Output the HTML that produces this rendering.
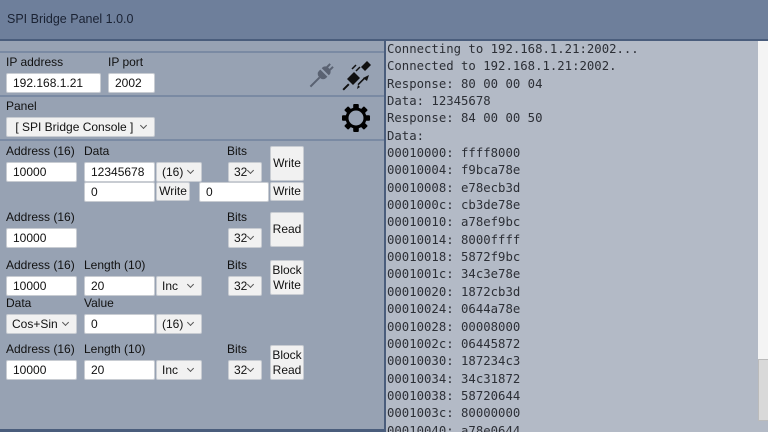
<!DOCTYPE html>
<html><head><meta charset="utf-8"><style>
*{box-sizing:border-box;margin:0;padding:0}
html,body{width:768px;height:432px;overflow:hidden}
body{background:#97a2b3;font-family:"Liberation Sans",Arial,sans-serif;font-size:12px;color:#111;position:relative}
.a{position:absolute}
.hdr{left:0;top:0;width:768px;height:41px;background:#6e7f9b;border-bottom:2px solid #4a5d7c}
.hdr span{position:absolute;left:7px;top:12px;font-size:12.5px;color:#1a2233}
.sep{position:absolute;left:0;width:384px;height:2px;background:#7a8aa3}
.in{position:absolute;background:#fff;border:1px solid #c8ccd2;border-radius:2px;height:20px;line-height:18px;padding-left:6px;font-size:12px;white-space:nowrap}
.sel{position:absolute;background:#f1f1f1;border:1px solid #c8ccd2;border-radius:2px;height:20px;line-height:18px;padding-left:5px;font-size:12px;white-space:nowrap}
.sel:after{content:"";position:absolute;right:8px;top:5px;width:4px;height:4px;border-right:1px solid #555;border-bottom:1px solid #555;transform:rotate(45deg)}
.btn{position:absolute;background:#f1f1f1;border:1px solid #c8ccd2;border-radius:2px;text-align:center;font-size:12px;display:flex;align-items:center;justify-content:center;line-height:15px}
.l{position:absolute;font-size:12px;white-space:nowrap}
.con{left:384px;top:41px;width:384px;height:391px;background:#b3bac6;border-left:2px solid #4a5d7c;overflow:hidden}
.con pre{position:absolute;left:1px;top:0px;font-family:"DejaVu Sans Mono","Liberation Mono",monospace;font-size:12.3px;line-height:17.35px;color:#2c2f36}
</style></head><body>
<div class="a hdr"><span>SPI Bridge Panel 1.0.0</span></div>
<div class="sep" style="top:51px"></div>
<div class="sep" style="top:95px"></div>
<div class="sep" style="top:139px"></div>

<div class="l" style="left:6px;top:55px">IP address</div>
<div class="l" style="left:108px;top:55px">IP port</div>
<div class="in" style="left:6px;top:73px;width:95px">192.168.1.21</div>
<div class="in" style="left:108px;top:73px;width:47px">2002</div>
<svg class="a" style="left:305px;top:60px" width="32" height="32" viewBox="0 0 32 32"><g transform="rotate(45 16 16)" fill="#5a6272"><rect x="11" y="5" width="10" height="13" rx="4"/><rect x="10" y="10" width="12" height="2" fill="#97a2b3"/><rect x="15" y="18" width="2" height="13"/><rect x="13" y="1" width="2" height="5"/><rect x="17" y="1" width="2" height="5"/></g></svg>
<svg class="a" style="left:341px;top:58px" width="32" height="34" viewBox="0 0 32 34"><g fill="#111"><path d="M20 9 L26 3 L30 7 L24 13 Z"/><path d="M13 14 L19 20 L12 27 L6 21 Z"/><rect x="1" y="28" width="8" height="2" transform="rotate(-45 5 29)"/><path d="M22 20 L28 17 L26 23 Z"/><path d="M19 29 L16 31 L17 27 Z"/><rect x="19" y="19" width="1.6" height="9" transform="rotate(45 20 24)"/></g><path d="M15 13 L19 9 M11 11 L15 7" stroke="#111" stroke-width="1.5"/></svg>

<div class="l" style="left:6px;top:99px">Panel</div>
<div class="sel" style="left:6px;top:117px;width:149px">&nbsp;[ SPI Bridge Console ]</div>
<svg class="a" style="left:340px;top:102px" width="32" height="32" viewBox="0 0 32 32"><g fill="#000"><circle cx="16" cy="16" r="10.5"/><rect x="13.2" y="2" width="5.6" height="28" rx="1"/><rect x="13.2" y="2" width="5.6" height="28" rx="1" transform="rotate(45 16 16)"/><rect x="13.2" y="2" width="5.6" height="28" rx="1" transform="rotate(90 16 16)"/><rect x="13.2" y="2" width="5.6" height="28" rx="1" transform="rotate(135 16 16)"/></g><circle cx="16" cy="16" r="7.5" fill="#97a2b3"/></svg>

<div class="l" style="left:6px;top:144px">Address (16)</div>
<div class="l" style="left:84px;top:144px">Data</div>
<div class="l" style="left:227px;top:144px">Bits</div>
<div class="in" style="left:6px;top:162px;width:71px">10000</div>
<div class="in" style="left:84px;top:162px;width:71px">12345678</div>
<div class="sel" style="left:156px;top:162px;width:46px">(16)</div>
<div class="sel" style="left:228px;top:162px;width:34px">32</div>
<div class="btn" style="left:270px;top:146px;width:34px;height:35px">Write</div>
<div class="in" style="left:84px;top:182px;width:71px">0</div>
<div class="btn" style="left:156px;top:182px;width:34px;height:19px">Write</div>
<div class="in" style="left:199px;top:182px;width:70px">0</div>
<div class="btn" style="left:270px;top:182px;width:34px;height:19px">Write</div>

<div class="l" style="left:6px;top:210px">Address (16)</div>
<div class="l" style="left:227px;top:210px">Bits</div>
<div class="in" style="left:6px;top:228px;width:71px">10000</div>
<div class="sel" style="left:228px;top:228px;width:34px">32</div>
<div class="btn" style="left:270px;top:212px;width:34px;height:35px">Read</div>

<div class="l" style="left:6px;top:258px">Address (16)</div>
<div class="l" style="left:84px;top:258px">Length (10)</div>
<div class="l" style="left:227px;top:258px">Bits</div>
<div class="in" style="left:6px;top:276px;width:71px">10000</div>
<div class="in" style="left:84px;top:276px;width:71px">20</div>
<div class="sel" style="left:156px;top:276px;width:46px">Inc</div>
<div class="sel" style="left:228px;top:276px;width:34px">32</div>
<div class="btn" style="left:270px;top:260px;width:34px;height:35px">Block<br>Write</div>

<div class="l" style="left:6px;top:296px">Data</div>
<div class="l" style="left:84px;top:296px">Value</div>
<div class="sel" style="left:6px;top:314px;width:71px">Cos+Sin</div>
<div class="in" style="left:84px;top:314px;width:71px">0</div>
<div class="sel" style="left:156px;top:314px;width:46px">(16)</div>

<div class="l" style="left:6px;top:342px">Address (16)</div>
<div class="l" style="left:84px;top:342px">Length (10)</div>
<div class="l" style="left:227px;top:342px">Bits</div>
<div class="in" style="left:6px;top:360px;width:71px">10000</div>
<div class="in" style="left:84px;top:360px;width:71px">20</div>
<div class="sel" style="left:156px;top:360px;width:46px">Inc</div>
<div class="sel" style="left:228px;top:360px;width:34px">32</div>
<div class="btn" style="left:270px;top:345px;width:34px;height:35px">Block<br>Read</div>

<div class="a con"><pre>Connecting to 192.168.1.21:2002...
Connected to 192.168.1.21:2002.
Response: 80 00 00 04
Data: 12345678
Response: 84 00 00 50
Data:
00010000: ffff8000
00010004: f9bca78e
00010008: e78ecb3d
0001000c: cb3de78e
00010010: a78ef9bc
00010014: 8000ffff
00010018: 5872f9bc
0001001c: 34c3e78e
00010020: 1872cb3d
00010024: 0644a78e
00010028: 00008000
0001002c: 06445872
00010030: 187234c3
00010034: 34c31872
00010038: 58720644
0001003c: 80000000
00010040: a78e0644</pre>
<div class="a" style="left:372px;top:0;width:12px;height:318px;background:#f4f4f4"></div>
<div class="a" style="left:372px;top:318px;width:12px;height:62px;background:#d9d9d9;border:1px solid #bbb"></div>
</div>
<div class="a" style="left:0;top:429px;width:384px;height:3px;background:#4a5d7c"></div>
</body></html>
